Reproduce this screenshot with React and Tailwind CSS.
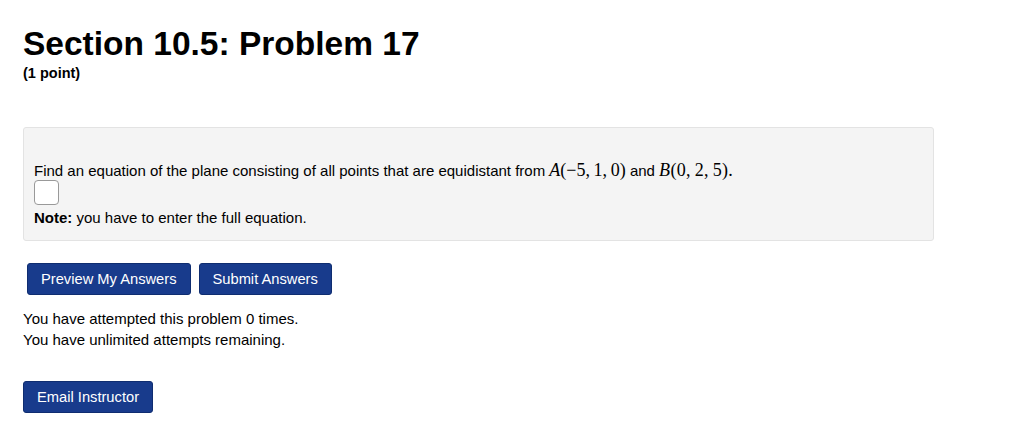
export default function App() {
  const mathFont = { fontFamily: '"Liberation Serif", "DejaVu Serif", serif' };
  return (
    <div className="w-[1024px] h-[438px] bg-white text-black font-['Liberation_Sans',Arial,sans-serif] px-[23px] pt-[26px]">
      {/* Header */}
      <h1 className="text-[33.5px] leading-[36px] font-bold">Section 10.5: Problem 17</h1>
      <div className="text-[14.5px] leading-[18px] font-bold mt-[2px]">(1 point)</div>

      {/* Problem box */}
      <div className="mt-[45px] w-[911px] h-[114px] bg-[#f4f4f4] border border-[#e3e3e3] rounded-[3px] px-[10px] pt-[32px]">
        <p className="text-[15px] leading-[20px] h-[20px] whitespace-nowrap">
          Find an equation of the plane consisting of all points that are equidistant from{' '}
          <span className="text-[18px] leading-[20px]" style={mathFont}>
            <i>A</i>(−5,&thinsp;1,&thinsp;0)
          </span>{' '}
          and{' '}
          <span className="text-[18px] leading-[20px] tracking-[0.3px]" style={mathFont}>
            <i>B</i>(0,&thinsp;2,&thinsp;5).
          </span>
        </p>
        <div className="w-[25px] h-[25px] bg-white border border-[#999] rounded-[4px]" />
        <p className="text-[15px] leading-[20px] mt-[3px]">
          <b>Note:</b> you have to enter the full equation.
        </p>
      </div>

      {/* Actions */}
      <div className="flex gap-[8px] mt-[22px] ml-[4px]">
        <button className="h-[32px] px-[13px] bg-[#183b8c] border border-[#0f2d70] rounded-[3px] text-white text-[14.7px]">
          Preview My Answers
        </button>
        <button className="h-[32px] px-[13px] bg-[#183b8c] border border-[#0f2d70] rounded-[3px] text-white text-[14.7px]">
          Submit Answers
        </button>
      </div>

      <div className="mt-[13px] text-[15px] leading-[21px]">
        <p>You have attempted this problem 0 times.</p>
        <p>You have unlimited attempts remaining.</p>
      </div>

      <button className="mt-[31px] h-[32px] px-[13px] bg-[#183b8c] border border-[#0f2d70] rounded-[3px] text-white text-[14.7px]">
        Email Instructor
      </button>
    </div>
  );
}
